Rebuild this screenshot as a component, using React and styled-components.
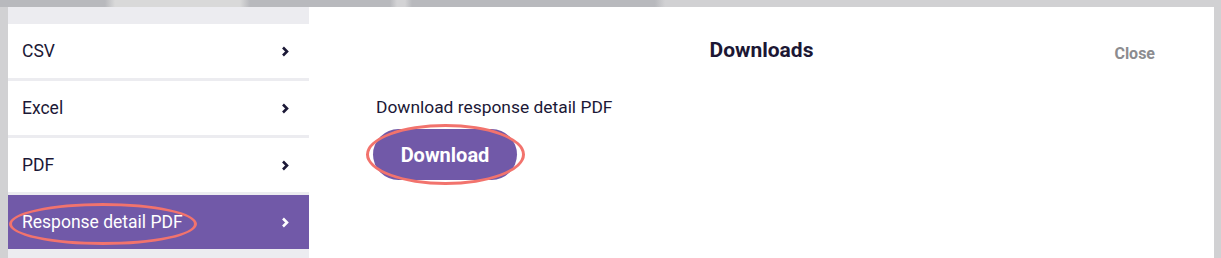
import styled, { createGlobalStyle } from 'styled-components'

/* --------------Global--------------- */
const GlobalStyle = createGlobalStyle`
html, body {
  margin: 0;
  height: 100%;
}
body {
  background-color: #d1d1d3;
  background-image: linear-gradient(90deg,
    #b8b9bd 0px, #b8b9bd 105px, #d9d9d9 115px, #d9d9d9 240px,
    #b8b9bd 250px, #b8b9bd 390px, #d3d3d5 397px, #d3d3d5 405px,
    #b8b9bd 412px, #b8b9bd 655px, #d1d1d3 665px);
  background-size: 100% 7px;
  background-repeat: no-repeat;
  font-family: Roboto, "Liberation Sans", Arial, sans-serif;
  overflow: hidden;
}
#root {
  height: 100%;
}
`

const Page = styled.div`
box-sizing: border-box;
height: 100%;
padding: 7px 7px 0 8px;
`

const Modal = styled.div`
display: flex;
height: 100%;
background: #ffffff;
`

/* --------------Sidebar--------------- */
const Sidebar = styled.nav`
width: 301px;
flex-shrink: 0;
background: #ececf0;
padding-top: 17px;
display: flex;
flex-direction: column;
gap: 3px;
`

const Item = styled.div`
position: relative;
height: 54px;
display: flex;
align-items: center;
justify-content: space-between;
padding: 0 20px 0 14px;
background: ${p => (p.$active ? '#7159a8' : '#ffffff')};
color: ${p => (p.$active ? '#ffffff' : '#1b1836')};
font-size: 17.5px;
cursor: pointer;
`

const Chevron = ({ color }) => (
  <svg width="8" height="11" viewBox="0 0 8 11">
    <path d="M2 1.5 L6 5.5 L2 9.5" fill="none" stroke={color} strokeWidth="2.6" />
  </svg>
)

/* annotation rings drawn over the screenshot */
const Ring = styled.span`
position: absolute;
left: ${p => p.$left}px;
top: ${p => p.$top}px;
width: ${p => p.$width}px;
height: ${p => p.$height}px;
border: 3px solid #f2736d;
border-radius: 50%;
box-sizing: border-box;
pointer-events: none;
`

/* --------------Content--------------- */
const Content = styled.section`
flex: 1;
padding: 0 59px;
`

const Header = styled.div`
position: relative;
height: 90px;
box-sizing: border-box;
padding-top: 31px;
display: flex;
justify-content: center;
align-items: flex-start;
`

const Title = styled.h2`
margin: 0;
font-size: 21px;
font-weight: 700;
color: #1c1734;
`

const Close = styled.button`
position: absolute;
right: 0;
top: 37px;
border: none;
background: none;
padding: 0;
font-family: inherit;
font-size: 16px;
font-weight: 700;
color: #8c8c8f;
cursor: pointer;
`

const Body = styled.div`
padding-left: 8px;
`

const Label = styled.p`
margin: 0;
font-size: 17.4px;
color: #1b1836;
`

const ButtonWrap = styled.div`
position: relative;
display: inline-block;
margin-top: 12px;
margin-left: -3px;
`

const DownloadButton = styled.button`
display: block;
width: 144px;
height: 51px;
border: none;
border-radius: 26px;
background: #7159a8;
color: #ffffff;
font-family: inherit;
font-size: 20px;
font-weight: 700;
cursor: pointer;
`

const items = ['CSV', 'Excel', 'PDF', 'Response detail PDF']

const App = () => {
  const active = 'Response detail PDF'

  return (
    <>
      <GlobalStyle />
      <Page>
        <Modal>
          <Sidebar>
            {items.map(item => (
              <Item key={item} $active={item === active}>
                <span>{item}</span>
                <Chevron color={item === active ? '#ffffff' : '#1b1836'} />
                {item === active && <Ring $left={1} $top={8} $width={188} $height={42} />}
              </Item>
            ))}
          </Sidebar>

          <Content>
            <Header>
              <Title>Downloads</Title>
              <Close>Close</Close>
            </Header>
            <Body>
              <Label>Download response detail PDF</Label>
              <ButtonWrap>
                <DownloadButton>Download</DownloadButton>
                <Ring $left={-7} $top={-5} $width={159} $height={61} />
              </ButtonWrap>
            </Body>
          </Content>
        </Modal>
      </Page>
    </>
  )
}

export default App
